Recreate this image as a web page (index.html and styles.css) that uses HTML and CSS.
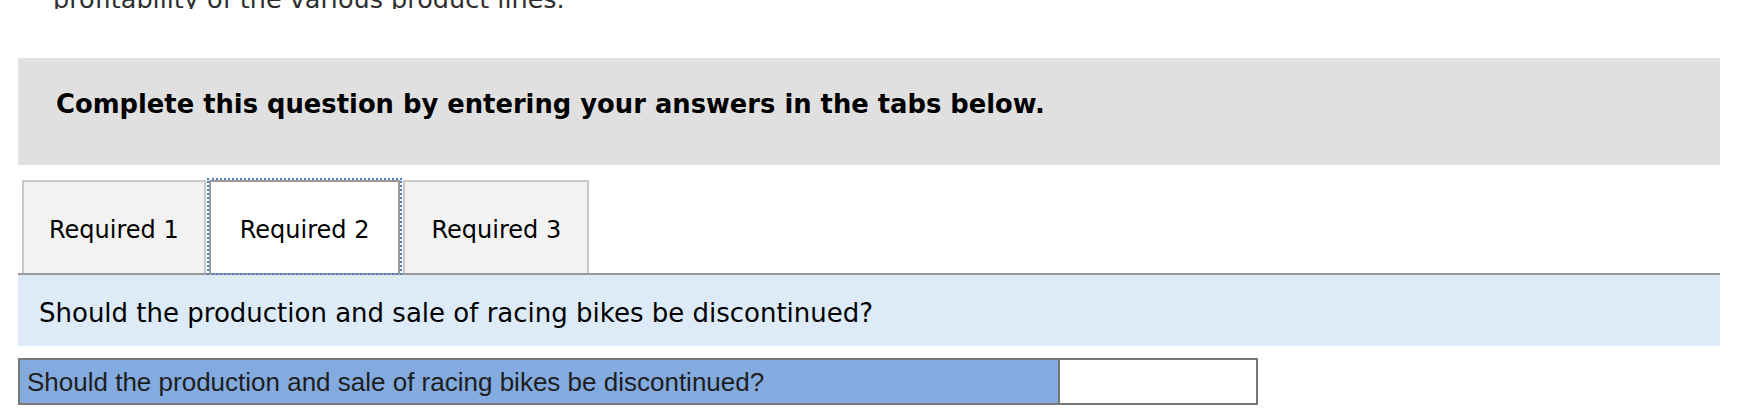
FILE: index.html
```html
<!DOCTYPE html>
<html lang="en">
<head>
<meta charset="utf-8">
<title>Required 2</title>
<link rel="stylesheet" href="styles.css">
</head>
<body>
<div class="prev-clip">
  <p class="prev-text">profitability of the various product lines.</p>
</div>
<main class="page">
  <div class="instructions">
    <h2 class="instructions-title">Complete this question by entering your answers in the tabs below.</h2>
  </div>
  <div class="tabs" role="tablist">
    <button class="tab" type="button" role="tab">Required 1</button>
    <button class="tab tab-active" type="button" role="tab" aria-selected="true">Required 2</button>
    <button class="tab tab-last" type="button" role="tab">Required 3</button>
  </div>
  <div class="prompt">Should the production and sale of racing bikes be discontinued?</div>
  <div class="answer">
    <div class="answer-label">Should the production and sale of racing bikes be discontinued?</div>
    <div class="answer-input"></div>
  </div>
</main>
</body>
</html>
```
FILE: styles.css
```css
html, body {
  margin: 0;
  padding: 0;
  background: #ffffff;
}

body {
  font-family: "DejaVu Sans", Verdana, sans-serif;
  color: #000;
}

.prev-clip {
  height: 9px;
  overflow: hidden;
  padding-left: 53px;
}

.prev-text {
  margin: -16px 0 0 0;
  font-size: 25.5px;
  line-height: 30px;
  color: #2e2e2e;
  white-space: nowrap;
}

.page {
  margin: 49px 22px 0 18px;
}

.instructions {
  background: #e0e0e0;
  height: 107px;
  box-sizing: border-box;
  padding: 31px 38px 0 38px;
}

.instructions-title {
  margin: 0;
  font-size: 25.8px;
  line-height: 30px;
  font-weight: bold;
  color: #000;
}

.tabs {
  display: flex;
  gap: 3px;
  padding-left: 4px;
  margin-top: 15px;
  border-bottom: 2px solid #999;
}

.tab {
  font-family: "DejaVu Sans", Verdana, sans-serif;
  font-size: 24px;
  line-height: 26px;
  color: #000;
  background: #f2f2f2;
  border: 2px solid #c8c8c8;
  border-bottom: none;
  margin: 0;
  padding: 35px 25px 30px 25px;
  cursor: pointer;
}

.tab-active {
  background: #ffffff;
  border-color: #9a9a9a;
  padding-left: 29px;
  padding-right: 29px;
  outline: 2px dotted #4a7bc4;
  outline-offset: 0;
}

.tab-last {
  padding-left: 26px;
  padding-right: 26px;
}

.prompt {
  background: #ddeaf7;
  height: 71px;
  box-sizing: border-box;
  padding: 23px 21px 0 21px;
  font-size: 26px;
  line-height: 30px;
  color: #000;
}

.answer {
  margin-top: 12px;
  display: grid;
  grid-template-columns: 1038px 198px;
  width: max-content;
  border: 2px solid #777;
}

.answer-label {
  background: #84abdf;
  height: 43px;
  box-sizing: border-box;
  padding: 6px 7px 0 7px;
  font-family: "Liberation Sans", Arial, sans-serif;
  font-size: 26px;
  line-height: 32px;
  color: #1e1e1e;
}

.answer-input {
  background: #ffffff;
  border-left: 2px solid #777;
}
```
